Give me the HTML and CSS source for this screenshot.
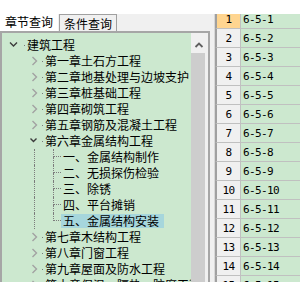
FILE: index.html
```html
<!DOCTYPE html>
<html lang="zh-CN">
<head>
  <meta charset="UTF-8" />
  <title>章节查询</title>
  <link rel="stylesheet" href="styles.css">
</head>
<body>
  <div class="app">
    <div class="side">
      <div class="tabs">
        <div class="tab active">章节查询</div>
        <div class="tab">条件查询</div>
      </div>

      <div class="panel">
        <div class="tree">
          <div class="row lv0">
            <span class="twisty"><svg width="16" height="16"><polyline points="5,5.5 8.5,9 12,5.5" class="open" /></svg></span>
            <span class="dot"></span>
            <span class="label">建筑工程</span>
          </div>
          <div class="row lv1">
            <span class="twisty"><svg width="16" height="16"><polyline points="9.5,4 13.5,8 9.5,12" class="shut" /></svg></span>
            <span class="dot"></span>
            <span class="label">第一章土石方工程</span>
          </div>
          <div class="row lv1">
            <span class="twisty"><svg width="16" height="16"><polyline points="9.5,4 13.5,8 9.5,12" class="shut" /></svg></span>
            <span class="dot"></span>
            <span class="label">第二章地基处理与边坡支护</span>
          </div>
          <div class="row lv1">
            <span class="twisty"><svg width="16" height="16"><polyline points="9.5,4 13.5,8 9.5,12" class="shut" /></svg></span>
            <span class="dot"></span>
            <span class="label">第三章桩基础工程</span>
          </div>
          <div class="row lv1">
            <span class="twisty"><svg width="16" height="16"><polyline points="9.5,4 13.5,8 9.5,12" class="shut" /></svg></span>
            <span class="dot"></span>
            <span class="label">第四章砌筑工程</span>
          </div>
          <div class="row lv1">
            <span class="twisty"><svg width="16" height="16"><polyline points="9.5,4 13.5,8 9.5,12" class="shut" /></svg></span>
            <span class="dot"></span>
            <span class="label">第五章钢筋及混凝土工程</span>
          </div>
          <div class="row lv1">
            <span class="twisty"><svg width="16" height="16"><polyline points="7.5,5.5 10.5,8.5 13.5,5.5" class="open" /></svg></span>
            <span class="dot"></span>
            <span class="label">第六章金属结构工程</span>
          </div>
          <div class="row lv2">
            <span class="guide"></span>
            <span class="branch"><span class="up"></span><span class="down"></span></span>
            <span class="label">一、金属结构制作</span>
          </div>
          <div class="row lv2">
            <span class="guide"></span>
            <span class="branch"><span class="up"></span><span class="down"></span></span>
            <span class="label">二、无损探伤检验</span>
          </div>
          <div class="row lv2">
            <span class="guide"></span>
            <span class="branch"><span class="up"></span><span class="down"></span></span>
            <span class="label">三、除锈</span>
          </div>
          <div class="row lv2">
            <span class="guide"></span>
            <span class="branch"><span class="up"></span><span class="down"></span></span>
            <span class="label">四、平台摊销</span>
          </div>
          <div class="row lv2 last">
            <span class="guide"></span>
            <span class="branch"><span class="up"></span><span class="down"></span></span>
            <span class="label sel">五、金属结构安装</span>
          </div>
          <div class="row lv1">
            <span class="twisty"><svg width="16" height="16"><polyline points="9.5,4 13.5,8 9.5,12" class="shut" /></svg></span>
            <span class="dot"></span>
            <span class="label">第七章木结构工程</span>
          </div>
          <div class="row lv1">
            <span class="twisty"><svg width="16" height="16"><polyline points="9.5,4 13.5,8 9.5,12" class="shut" /></svg></span>
            <span class="dot"></span>
            <span class="label">第八章门窗工程</span>
          </div>
          <div class="row lv1">
            <span class="twisty"><svg width="16" height="16"><polyline points="9.5,4 13.5,8 9.5,12" class="shut" /></svg></span>
            <span class="dot"></span>
            <span class="label">第九章屋面及防水工程</span>
          </div>
          <div class="row lv1">
            <span class="twisty"><svg width="16" height="16"><polyline points="9.5,4 13.5,8 9.5,12" class="shut" /></svg></span>
            <span class="dot"></span>
            <span class="label">第十章保温、隔热、防腐工程</span>
          </div>
        </div>

        <div class="vscroll">
          <div class="sbtn"><svg width="10" height="8"><polyline points="1.5,6 5,2.5 8.5,6" /></svg></div>
          <div class="thumb"></div>
        </div>
      </div>
    </div>

    <div class="grid">
      <div class="grow current"><div class="gnum">1</div><div class="gcell">6-5-1</div></div>
      <div class="grow"><div class="gnum">2</div><div class="gcell">6-5-2</div></div>
      <div class="grow"><div class="gnum">3</div><div class="gcell">6-5-3</div></div>
      <div class="grow"><div class="gnum">4</div><div class="gcell">6-5-4</div></div>
      <div class="grow"><div class="gnum">5</div><div class="gcell">6-5-5</div></div>
      <div class="grow"><div class="gnum">6</div><div class="gcell">6-5-6</div></div>
      <div class="grow"><div class="gnum">7</div><div class="gcell">6-5-7</div></div>
      <div class="grow"><div class="gnum">8</div><div class="gcell">6-5-8</div></div>
      <div class="grow"><div class="gnum">9</div><div class="gcell">6-5-9</div></div>
      <div class="grow"><div class="gnum">10</div><div class="gcell">6-5-10</div></div>
      <div class="grow"><div class="gnum">11</div><div class="gcell">6-5-11</div></div>
      <div class="grow"><div class="gnum">12</div><div class="gcell">6-5-12</div></div>
      <div class="grow"><div class="gnum">13</div><div class="gcell">6-5-13</div></div>
      <div class="grow"><div class="gnum">14</div><div class="gcell">6-5-14</div></div>
      <div class="grow"><div class="gnum">15</div><div class="gcell">6-5-15</div></div>
    </div>
  </div>
</body>
</html>
```

FILE: styles.css
```css
body {
  margin: 0;
  background: #fff;
  font-family: "Noto Sans CJK SC", "Noto Sans", sans-serif;
  font-size: 12px;
  color: #000;
}

.app {
  display: flex;
  margin-top: 14px;
  height: 268px;
  overflow: hidden;
}

/* left side: tabs + tree */
.side {
  width: 214px;
  flex: none;
  display: flex;
  flex-direction: column;
  background: #f0f0f0;
}

.tabs {
  display: flex;
  height: 17px;
  flex: none;
}

.tab {
  padding: 0 4px 0 4px;
  margin-left: 1px;
  border: 1px solid #a0a0a0;
  border-bottom: none;
  box-sizing: border-box;
  line-height: 18px;
}

.tab.active {
  margin-left: 0;
  padding: 0 5px 0 5px;
  border: none;
  background: #fff;
  line-height: 15px;
}

.panel {
  flex: 1;
  min-height: 0;
  width: 210px;
  box-sizing: border-box;
  display: flex;
  border: 2px solid #a6a6a6;
  border-bottom: none;
  background: #cce8cf;
}

.tree {
  flex: 1;
  min-width: 0;
  padding-top: 4px;
  overflow: hidden;
  white-space: nowrap;
}

.row {
  display: flex;
  align-items: center;
  height: 16px;
}

.lv0 { padding-left: 3px; }
.lv1 { padding-left: 21px; }
.lv2 { padding-left: 32px; }

.twisty {
  width: 16px;
  height: 16px;
  flex: none;
}

.twisty svg { display: block; }

.twisty polyline {
  fill: none;
  stroke-width: 1.4;
}

.twisty .shut { stroke: #a2a2a2; }
.twisty .open { stroke: #3c3c3c; }

.dot {
  width: 6px;
  height: 1px;
  flex: none;
  background: linear-gradient(to right, transparent 3px, #7c7c7c 3px, #7c7c7c 4px, transparent 4px);
}

.label {
  line-height: 14px;
}

.guide {
  width: 19px;
  flex: none;
  align-self: stretch;
  box-sizing: border-box;
  border-left: 1px dotted #7c7c7c;
}

.branch {
  width: 8px;
  flex: none;
  align-self: stretch;
  display: flex;
  flex-direction: column;
}

.branch .up {
  height: 8px;
  box-sizing: border-box;
  border-left: 1px dotted #7c7c7c;
  border-bottom: 1px dotted #7c7c7c;
}

.branch .down {
  flex: 1;
  border-left: 1px dotted #7c7c7c;
}

.last .branch .down { border-left: none; }

.lv2 .label { margin-left: 2px; }

.lv2 .label.sel {
  margin-left: 0;
  padding: 0 5px 0 2px;
  background: #a6d6dc;
}

/* scrollbar */
.vscroll {
  width: 17px;
  flex: none;
  display: flex;
  flex-direction: column;
  background: #f0f0f0;
}

.sbtn {
  height: 20px;
  flex: none;
  display: flex;
  justify-content: center;
  align-items: center;
  padding-top: 4px;
  padding-right: 2px;
  box-sizing: border-box;
}

.sbtn polyline {
  fill: none;
  stroke: #606060;
  stroke-width: 1.8;
}

.thumb {
  flex: 1;
  margin-right: 3px;
  background: #cdcdcd;
}

/* right grid */
.grid {
  flex: 1;
  border-left: 1px solid #d8d8d8;
}

.grow {
  display: flex;
  height: 19px;
  box-sizing: border-box;
  border-left: 2px solid #a0a0a0;
  border-bottom: 1px solid #c0c0c0;
  font-family: "DejaVu Sans Mono", "Liberation Mono", monospace;
  font-size: 11px;
  letter-spacing: -0.6px;
  line-height: 20px;
}

.grow:first-child { margin-top: -4px; }

.gnum {
  width: 23px;
  flex: none;
  text-align: center;
  background: #f0f0f0;
  border-right: 1px solid #c0c0c0;
}

.current .gnum { background: #ffd590; }

.gcell {
  flex: 1;
  padding-left: 2px;
  background: #cce8cf;
}
```
